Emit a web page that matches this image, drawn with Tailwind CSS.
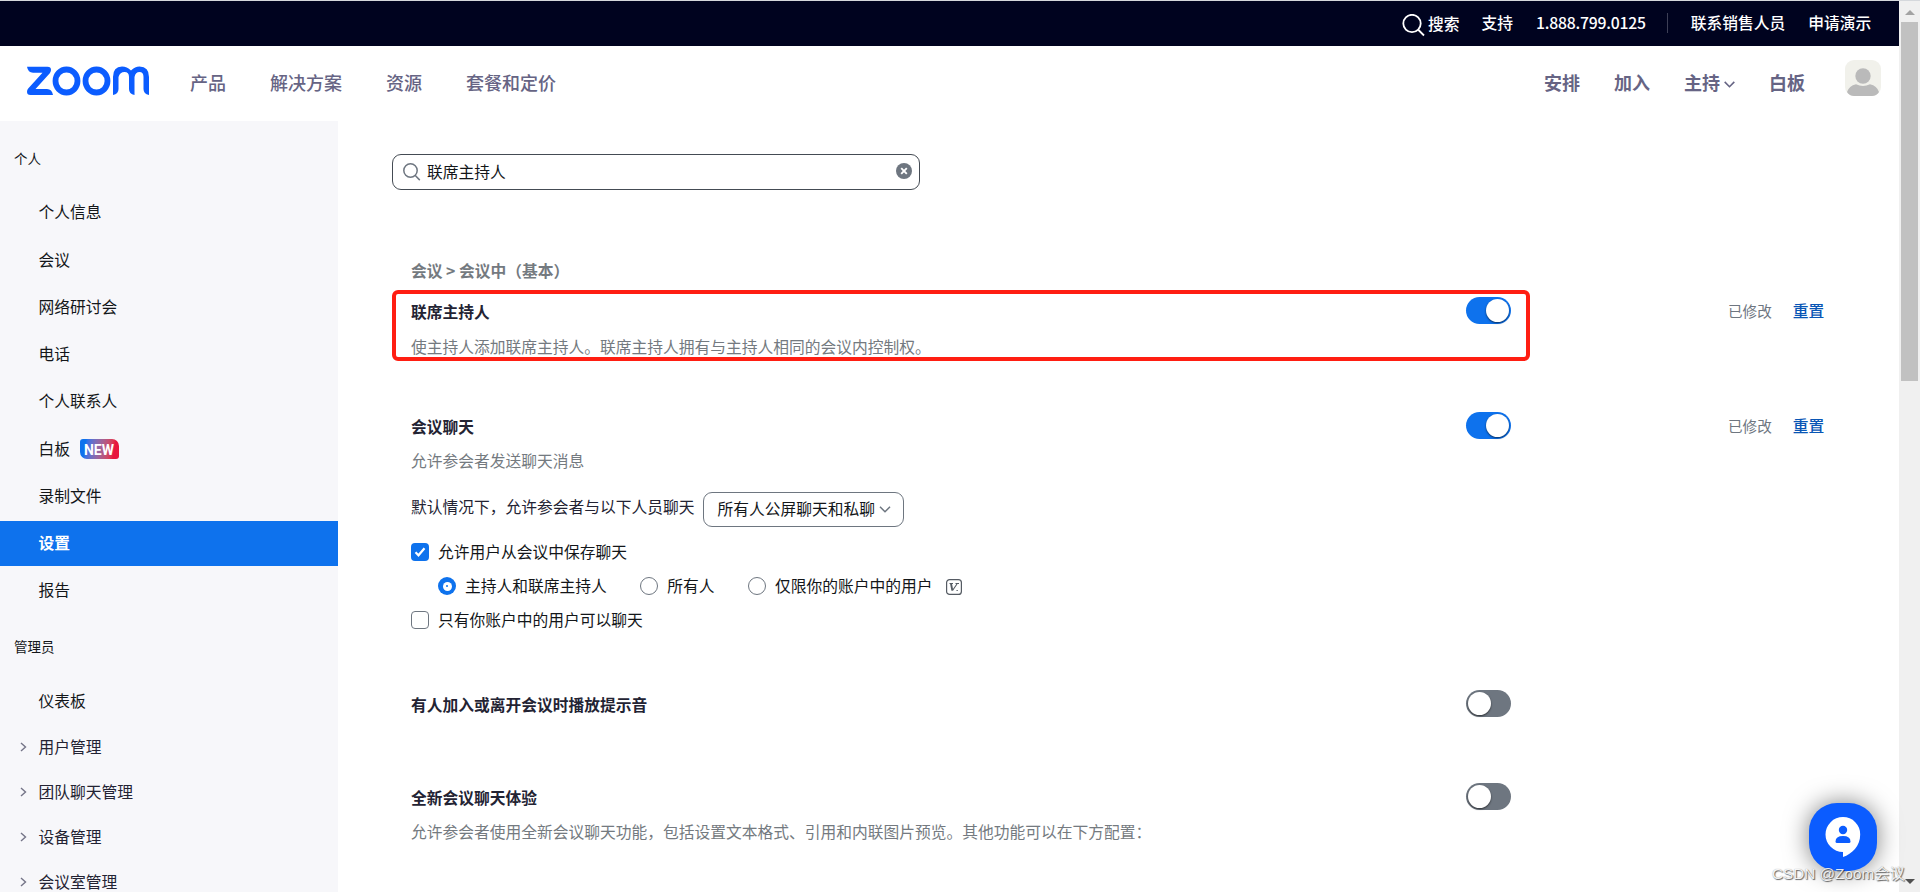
<!DOCTYPE html>
<html lang="zh-CN">
<head>
<meta charset="utf-8">
<title>Zoom 设置</title>
<script src="https://cdn.jsdelivr.net/npm/@tailwindcss/browser@4"></script>
</head>
<body class="relative flex h-[892px] w-[1920px] overflow-hidden bg-white font-['Noto_Sans_CJK_SC',sans-serif] text-[15.75px] leading-[24px] text-[#131619]">
<div class="flex w-[1899px] flex-col">
  <div class="flex h-[46px] shrink-0 items-center border-t border-[#d5d8dc] bg-[#00031f] pb-[1px] text-[15.75px] font-medium text-white">
    <a class="ml-[1402px] flex items-center gap-[3px] pt-[2px]">
      <svg class="mt-[3px] h-[23px] w-[23px]" viewBox="0 0 23 23" fill="none" stroke="currentColor" stroke-width="1.8"><circle cx="10" cy="9.5" r="8.7"/><path d="M16 15.500l6 6"/></svg>
      <span>搜索</span>
    </a>
    <a class="ml-[22px]">支持</a>
    <a class="ml-[23px] tracking-[-0.22px]">1.888.799.0125</a>
    <span class="ml-[21px] h-5 w-px bg-[#3d3f56]"></span>
    <a class="ml-[23px]">联系销售人员</a>
    <a class="ml-[23px]">申请演示</a>
  </div>
  <header class="flex h-[75px] shrink-0 items-center text-[18px] font-medium text-[#666484]">
    <svg class="-mt-[5px] ml-[27px] h-[30px] w-[122px]" viewBox="0 0 122 30" fill="none" stroke="#0b5cff">
      <path stroke="none" fill="#0b5cff" d="M0 .8h20.500q3.500 0 3.500 3.200q0 1.600-1.200 3.200L8.500 23H20q5 0 6 6H3.500Q0 29 0 25.800q0-1.600 1.200-3.200L15.500 6.700H6Q1 6.700 0 .8z"/>
      <ellipse cx="39.500" cy="15" rx="11" ry="11.500" stroke-width="5.800"/>
      <ellipse cx="69.500" cy="15" rx="11" ry="11.500" stroke-width="5.800"/>
      <path stroke="none" fill="#0b5cff" d="M86 29V11Q86 .5 95 .5q5 0 9 4q4-4 8.500-4Q122 .5 122 11v18q-5.500-1-5.500-6V11q0-5-4-5t-5 5v18q-5.500-1-5.500-6V11q0-5-4.500-5T91.500 11v12q0 5-5.500 6z"/>
    </svg>
    <a class="-mt-[4px] ml-[41px]">产品</a>
    <a class="-mt-[4px] ml-[44px]">解决方案</a>
    <a class="-mt-[4px] ml-[44px]">资源</a>
    <a class="-mt-[4px] ml-[44px]">套餐和定价</a>
    <div class="ml-auto mr-[18px] flex items-center font-bold">
      <a class="-mt-[4px]">安排</a>
      <a class="-mt-[4px] ml-[34px]">加入</a>
      <a class="-mt-[4px] ml-[34px] flex items-center gap-1">主持
        <svg class="mt-[5px] h-[7px] w-[11px]" viewBox="0 0 11 7" fill="none" stroke="currentColor" stroke-width="1.6"><path d="M.7.900L5.500 5.700 10.300.900"/></svg></a>
      <a class="-mt-[4px] ml-[34px]">白板</a>
      <svg class="-mt-[11px] ml-[40px] h-9 w-9" viewBox="0 0 36 36"><rect width="36" height="36" rx="9" fill="#f1f1eb"/><circle cx="18" cy="16" r="7.700" fill="#bababa"/><path d="M2 32Q4 26 11 24.300q7 3.400 14 0Q32 26 34 32q-2.500 4-7 4H9q-4.500 0-7-4z" fill="#bababa"/></svg>
    </div>
  </header>
  <div class="flex min-h-0 flex-1">
    <aside class="w-[338px] shrink-0 overflow-hidden bg-[#f7f7fa]">
      <div class="mt-[23px] flex h-[27px] items-center pl-[14px] text-[13.500px]">个人</div>
      <nav class="mt-[19px] flex flex-col gap-[2.250px]">
        <a class="flex h-[45px] items-center pb-[1px] pl-[38.500px]">个人信息</a>
        <a class="flex h-[45px] items-center pl-[38.500px]">会议</a>
        <a class="flex h-[45px] items-center pl-[38.500px]">网络研讨会</a>
        <a class="flex h-[45px] items-center pl-[38.500px]">电话</a>
        <a class="flex h-[45px] items-center pb-[1px] pl-[38.500px]">个人联系人</a>
        <a class="flex h-[45px] items-center gap-[9.500px] pl-[38.500px]">白板<span class="flex h-5 w-[39px] items-center justify-center rounded-[7px] rounded-tl-[3px] rounded-br-[3px] bg-linear-100 from-[#0e72ed] from-15% to-[#e8173d] to-85% pt-[2px] font-['Roboto',sans-serif] text-[14px] font-bold text-white">NEW</span></a>
        <a class="flex h-[45px] items-center pl-[38.500px]">录制文件</a>
        <a class="flex h-[45px] items-center bg-[#0e72ed] pl-[38.500px] font-bold text-white">设置</a>
        <a class="flex h-[45px] items-center pb-[1px] pl-[38.500px]">报告</a>
      </nav>
      <div class="mt-[19px] flex h-[27px] items-center pl-[14px] text-[13.500px]">管理员</div>
      <nav class="mt-[19px] flex flex-col">
        <a class="flex h-[46px] items-center pb-[1px] pl-[38.500px]">仪表板</a>
        <a class="flex h-[45px] items-center pl-[20px] text-[#232333]"><svg class="mr-[11.500px] h-[10px] w-[7px]" viewBox="0 0 7 10" fill="none" stroke="#747487" stroke-width="1.400"><path d="M1 1l4.500 4L1 9"/></svg>用户管理</a>
        <a class="flex h-[45px] items-center pl-[20px] text-[#232333]"><svg class="mr-[11.500px] h-[10px] w-[7px]" viewBox="0 0 7 10" fill="none" stroke="#747487" stroke-width="1.400"><path d="M1 1l4.500 4L1 9"/></svg>团队聊天管理</a>
        <a class="flex h-[45px] items-center pl-[20px] text-[#232333]"><svg class="mr-[11.500px] h-[10px] w-[7px]" viewBox="0 0 7 10" fill="none" stroke="#747487" stroke-width="1.400"><path d="M1 1l4.500 4L1 9"/></svg>设备管理</a>
        <a class="flex h-[45px] items-center pl-[20px] text-[#232333]"><svg class="mr-[11.500px] h-[10px] w-[7px]" viewBox="0 0 7 10" fill="none" stroke="#747487" stroke-width="1.400"><path d="M1 1l4.500 4L1 9"/></svg>会议室管理</a>
      </nav>
    </aside>
    <main class="flex flex-1 flex-col overflow-hidden pl-[54px] pt-[33px]">
      <div class="flex h-[36px] w-[528px] shrink-0 items-center rounded-[9px] border border-[#444b53] px-[10px]">
        <svg class="h-[18px] w-[18px]" viewBox="0 0 18 18" fill="none" stroke="#6e7680" stroke-width="1.500"><circle cx="7.500" cy="7.500" r="6.700"/><path d="M12 12.300l4.800 4.800"/></svg>
        <span class="ml-[6px]">联席主持人</span>
        <svg class="-mt-[2px] ml-auto mr-[-3px] h-4 w-4" viewBox="0 0 16 16"><circle cx="8" cy="8" r="8" fill="#6e7680"/><path d="M5.200 5.200l5.600 5.600M10.800 5.200l-5.600 5.600" stroke="#fff" stroke-width="1.900"/></svg>
      </div>
      <div class="ml-[19px] mt-[69px] h-6 shrink-0 font-bold text-[#747a80]">会议 &gt; 会议中（基本）</div>
      <section class="relative ml-[19px] mt-[17px] flex h-[115px] shrink-0">
        <div class="w-[1055px]">
          <h3 class="font-bold text-[#232333]">联席主持人</h3>
          <p class="mt-[11px] text-[#747a80]">使主持人添加联席主持人。联席主持人拥有与主持人相同的会议内控制权。</p>
        </div>
        <span class="-mt-[3px] flex h-[27px] w-[45px] items-center justify-end rounded-full bg-[#0e72ed] pr-[2px]"><i class="size-[23px] rounded-full bg-white shadow-[0_1px_2px_rgba(0,0,0,.6)]"></i></span>
        <span class="-mt-[1px] ml-[217px] text-[14.600px] text-[#6e7680]">已修改</span>
        <a class="-mt-[1px] ml-[21px] font-medium text-[#0956b5]">重置</a>
        <div class="absolute -left-[19px] -top-[10px] h-[71px] w-[1138px] rounded-[6px] border-4 border-[#ff1e12]"></div>
      </section>
      <section class="ml-[19px] flex h-[278px] shrink-0">
        <div class="w-[1055px] text-[#232333]">
          <h3 class="font-bold">会议聊天</h3>
          <p class="mt-[10px] text-[#747a80]">允许参会者发送聊天消息</p>
          <div class="mt-[18px] flex h-[36px] items-center">
            <span class="-mt-[5px]">默认情况下，允许参会者与以下人员聊天</span>
            <span class="ml-[8px] flex h-[35px] w-[201px] items-center justify-between rounded-[9px] border border-[#6e7680] pl-[14px] pr-[12px] text-[#131619]">所有人公屏聊天和私聊
              <svg class="h-[7px] w-[12px]" viewBox="0 0 12 7" fill="none" stroke="#6e7680" stroke-width="1.500"><path d="M1 .800l5 5 5-5"/></svg></span>
          </div>
          <div class="mt-[13px] flex items-center gap-[9px] text-[#131619]">
            <svg class="h-[18px] w-[18px]" viewBox="0 0 18 18"><rect width="18" height="18" rx="4" fill="#0e72ed"/><path d="M4.500 9.300l3 3 6-7" fill="none" stroke="#fff" stroke-width="2.200"/></svg>允许用户从会议中保存聊天</div>
          <div class="ml-[27px] mt-[10px] flex items-center text-[#131619]">
            <span class="flex size-[18px] items-center justify-center rounded-full bg-[#0e72ed]"><i class="flex size-[9px] items-center justify-center rounded-full bg-white"><i class="size-[2px] rounded-full bg-[#0e72ed]"></i></i></span>
            <span class="ml-[9px]">主持人和联席主持人</span>
            <span class="ml-[33px] size-[18px] rounded-full border border-[#6e7680]"></span>
            <span class="ml-[9.500px]">所有人</span>
            <span class="ml-[33px] size-[18px] rounded-full border border-[#6e7680]"></span>
            <span class="ml-[9.500px]">仅限你的账户中的用户</span>
            <svg class="ml-[13px] mt-[2px] h-4 w-4" viewBox="0 0 16 16" fill="none" stroke="#555b63"><rect x=".600" y=".600" width="14.800" height="14.800" rx="3" stroke-width="1.200"/><path d="M3.500 4.500h3.500M9.500 4.500h3.500M6.500 11.500L11 5" stroke-width="1.100"/><path d="M5 4.500l1.300 7" stroke-width="1.900"/><path d="M10.500 11.500h1.300" stroke-width="1.200"/></svg>
          </div>
          <div class="mt-[10px] flex items-center gap-[9px] text-[#131619]"><span class="size-[18px] rounded-[4px] border border-[#6e7680]"></span>只有你账户中的用户可以聊天</div>
        </div>
        <span class="-mt-[3px] flex h-[27px] w-[45px] items-center justify-end rounded-full bg-[#0e72ed] pr-[2px]"><i class="size-[23px] rounded-full bg-white shadow-[0_1px_2px_rgba(0,0,0,.6)]"></i></span>
        <span class="-mt-[1px] ml-[217px] text-[14.600px] text-[#6e7680]">已修改</span>
        <a class="-mt-[1px] ml-[21px] font-medium text-[#0956b5]">重置</a>
      </section>
      <section class="ml-[19px] flex h-[93px] shrink-0">
        <h3 class="w-[1055px] font-bold text-[#232333]">有人加入或离开会议时播放提示音</h3>
        <span class="-mt-[3px] flex h-[27px] w-[45px] items-center rounded-full bg-[#6e7680] pl-[2px]"><i class="size-[23px] rounded-full bg-white shadow-[0_1px_2px_rgba(0,0,0,.6)]"></i></span>
      </section>
      <section class="ml-[19px] flex shrink-0">
        <div class="w-[1055px]">
          <h3 class="font-bold text-[#232333]">全新会议聊天体验</h3>
          <p class="mt-[10px] text-[#747a80]">允许参会者使用全新会议聊天功能，包括设置文本格式、引用和内联图片预览。其他功能可以在下方配置：</p>
        </div>
        <span class="-mt-[3px] flex h-[27px] w-[45px] items-center rounded-full bg-[#6e7680] pl-[2px]"><i class="size-[23px] rounded-full bg-white shadow-[0_1px_2px_rgba(0,0,0,.6)]"></i></span>
      </section>
    </main>
  </div>
</div>
<div class="flex w-[21px] flex-col items-center border-t border-[#d5d8dc] bg-[#f0f0f0]">
  <svg class="mt-[9px] h-[5px] w-[10px]" viewBox="0 0 10 5"><path d="M0 5L5 0l5 5z" fill="#a3a3a3"/></svg>
  <span class="mt-[7px] h-[359px] w-[17px] bg-[#c1c1c1]"></span>
  <svg class="mb-[8px] mt-auto h-[5px] w-[10px]" viewBox="0 0 10 5"><path d="M0 0l5 5 5-5z" fill="#505050"/></svg>
</div>
<div class="absolute left-[1809px] top-[803px] h-[68px] w-[68px] rounded-[28px] bg-[#0b5cff] shadow-[0_0_24px_rgba(0,0,0,.5)]">
  <svg class="h-full w-full" viewBox="0 0 68 68"><path fill="#fff" d="M34 14a17.200 17.200 0 0 1 17.200 17.500C51.200 43 43 51 34 54v-5A17.400 17.400 0 0 1 34 14z"/><circle cx="34" cy="27" r="4.200" fill="#0b5cff"/><path fill="#0b5cff" d="M26.500 38.500Q26.500 33 34 33t7.500 5.500q0 1.500-1.500 1.500H28q-1.500 0-1.500-1.500z"/></svg>
</div>
<div class="absolute left-[1772px] top-[862px] whitespace-nowrap font-['Liberation_Sans','Noto_Sans_CJK_SC',sans-serif] text-[15.300px] text-white/90 [text-shadow:1px_1px_1px_rgba(0,0,0,.6),0_0_1px_rgba(0,0,0,.4)]">CSDN @Zoom会议</div>
</body>
</html>
